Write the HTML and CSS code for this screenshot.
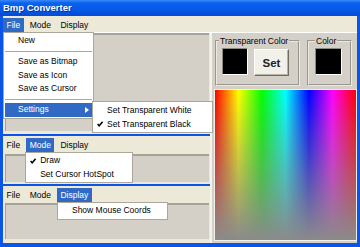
FILE: index.html
```html
<!DOCTYPE html>
<html lang="en">
  <head>
    <meta charset="UTF-8" />
    <meta name="viewport" content="width=device-width, initial-scale=1.0" />
    <title>Bmp Converter</title>
    <link rel="stylesheet" href="styles.css">
  </head>
  <body>
    <div class="window">
      <div class="titlebar">Bmp Converter</div>
      <div class="frame">
        <div class="menubar main-bar">
          <div class="menu open">File
            <div class="dropdown file-menu">
              <div class="item"><span class="mark"></span>New</div>
              <div class="sep"></div>
              <div class="item"><span class="mark"></span>Save as Bitmap</div>
              <div class="item"><span class="mark"></span>Save as Icon</div>
              <div class="item"><span class="mark"></span>Save as Cursor</div>
              <div class="sep"></div>
              <div class="item active"><span class="mark"></span>Settings<span class="arrow"></span>
                <div class="dropdown sub-menu">
                  <div class="item"><span class="mark"></span>Set Transparent White</div>
                  <div class="item">
                    <span class="mark"><svg width="6" height="6" viewBox="0 0 6 6"><path d="M0.6 3 L2.2 4.8 L5.6 0.8" fill="none" stroke="#000" stroke-width="1.5"/></svg></span>Set Transparent Black
                  </div>
                </div>
              </div>
            </div>
          </div>
          <div class="menu">Mode</div>
          <div class="menu">Display</div>
        </div>

        <div class="client">
          <div class="left">
            <div class="pane pane-1"></div>
            <div class="edge"></div>
            <div class="menubar">
              <div class="menu">File</div>
              <div class="menu open">Mode
                <div class="dropdown mode-menu">
                  <div class="item">
                    <span class="mark"><svg width="6" height="6" viewBox="0 0 6 6"><path d="M0.6 3 L2.2 4.8 L5.6 0.8" fill="none" stroke="#000" stroke-width="1.5"/></svg></span>Draw
                  </div>
                  <div class="item"><span class="mark"></span>Set Cursor HotSpot</div>
                </div>
              </div>
              <div class="menu">Display</div>
            </div>
            <div class="pane pane-2"></div>
            <div class="edge"></div>
            <div class="menubar">
              <div class="menu">File</div>
              <div class="menu">Mode</div>
              <div class="menu open">Display
                <div class="dropdown display-menu">
                  <div class="item"><span class="mark"></span>Show Mouse Coords</div>
                </div>
              </div>
            </div>
            <div class="pane pane-3"></div>
          </div>

          <div class="side">
            <div class="groups">
              <fieldset class="group transparent">
                <legend>Transparent Color</legend>
                <div class="group-body">
                  <div class="swatch"></div>
                  <button class="set">Set</button>
                </div>
              </fieldset>
              <fieldset class="group color">
                <legend>Color</legend>
                <div class="group-body">
                  <div class="swatch"></div>
                </div>
              </fieldset>
            </div>
            <div class="spectrum"></div>
          </div>
        </div>
      </div>
    </div>
  </body>
</html>
```

FILE: styles.css
```css
body {
  margin: 0;
  font-family: "Liberation Sans", Arial, sans-serif;
  font-size: 8.5px;
  color: #000;
}

.window {
  width: 360px;
  height: 247px;
  display: flex;
  flex-direction: column;
  background: #0a55e6;
}

.titlebar {
  height: 16px;
  line-height: 16px;
  padding-left: 3px;
  color: #fff;
  font-weight: bold;
  font-size: 9.5px;
  background: linear-gradient(#3a8af7, #0a62ef 3px, #0558e8 60%, #044bd8);
  text-shadow: 1px 1px 0 #0b3192;
}

.frame {
  flex: 1;
  display: flex;
  flex-direction: column;
  padding: 0 3px 4px;
  min-height: 0;
}

.menubar {
  display: flex;
  height: 16px;
  padding-top: 2px;
  box-sizing: border-box;
  background: #ece9d8;
}

.main-bar {
  height: 17px;
  border-bottom: 1px solid #fff;
}

.menu {
  position: relative;
  height: 14px;
  line-height: 14px;
  padding: 0 3.5px;
  margin-right: 2.5px;
}

.menu.open {
  background: #316ac5;
  color: #fff;
}

.dropdown {
  position: absolute;
  top: 100%;
  left: 0;
  z-index: 5;
  box-sizing: border-box;
  padding: 1px;
  background: #fff;
  color: #000;
  border: 1px solid #aca899;
}

.item {
  position: relative;
  display: flex;
  align-items: center;
  height: 13.5px;
  line-height: 13.5px;
  white-space: nowrap;
}

.item.active {
  background: #316ac5;
  color: #fff;
}

.mark {
  flex: none;
  width: 13px;
  display: flex;
  align-items: center;
  padding-left: 3px;
  box-sizing: border-box;
}

.sep {
  height: 1px;
  margin: 3.25px 0;
  background: #aca899;
}

.arrow {
  margin-left: auto;
  margin-right: 3px;
  border-left: 4px solid #fff;
  border-top: 3.5px solid transparent;
  border-bottom: 3.5px solid transparent;
}

.file-menu {
  width: 91px;
}

.sub-menu {
  left: 100%;
  top: -2.5px;
  width: 121px;
}

.sub-menu .item {
  height: 14px;
  line-height: 14px;
}

.mode-menu {
  left: -1px;
  width: 108px;
}

.display-menu {
  width: 111px;
}

.client {
  flex: 1;
  display: flex;
  min-height: 0;
}

.left {
  width: 207px;
  display: flex;
  flex-direction: column;
  background: #ece9d8;
}

.pane {
  margin: 0 1px 0 2px;
  box-sizing: border-box;
  background: #d4d0c8;
  border-top: 2px solid #a6a295;
  border-left: 1px solid #a6a295;
}

.pane-1 {
  height: 98px;
  margin-bottom: 3px;
}

.pane-2 {
  height: 28px;
  margin-top: 2px;
  margin-bottom: 2px;
}

.pane-3 {
  height: 36px;
  margin-top: 1px;
}

.edge {
  height: 2px;
  background: #0a55e6;
}

.side {
  width: 147px;
  box-sizing: border-box;
  padding: 3px 1px 0 3px;
  background: #d4d0c8;
  border-left: 2px solid #f3f2ec;
}

.groups {
  display: flex;
  gap: 7px;
  height: 50px;
}

.group {
  margin: 0;
  padding: 2px 5px 8px;
  box-sizing: border-box;
  min-width: 0;
  border: 2px groove #ebe9e0;
}

.group legend {
  padding: 0 1px;
  font-size: 8.5px;
  line-height: 10px;
  white-space: nowrap;
}

.transparent {
  width: 85px;
}

.transparent legend {
  margin-left: -3px;
}

.color {
  width: 45px;
  padding: 2px 6px 8px;
}

.group-body {
  display: flex;
  align-items: flex-start;
  gap: 6px;
}

.swatch {
  flex: none;
  width: 26px;
  height: 27px;
  box-sizing: border-box;
  background: #000;
  border: 1px solid;
  border-color: #8c8a80 #fff #fff #8c8a80;
}

.color .swatch {
  width: 27px;
}

.set {
  flex: none;
  width: 35px;
  height: 27px;
  margin-top: 1px;
  padding: 0;
  font: bold 11.5px "Liberation Sans", Arial, sans-serif;
  color: #222;
  background: #f1f0e9;
  border: 1px solid;
  border-color: #fff #6f6d62 #6f6d62 #fff;
  box-shadow: inset -1px -1px 0 #b5b2a5;
}

.spectrum {
  margin-top: 4px;
  height: 150px;
  outline: 1px solid #efeee7;
  background-image:
    linear-gradient(to bottom, rgba(138, 138, 138, 0), rgb(138, 138, 138)),
    linear-gradient(to right, #f00, #ff0, #0f0, #0ff, #00f, #f0f, #f00);
}
```
